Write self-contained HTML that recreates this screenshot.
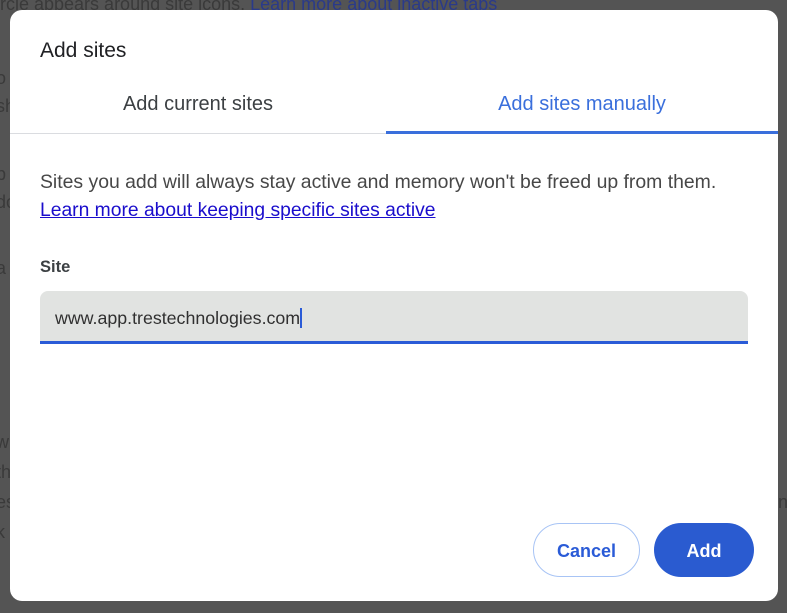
<!DOCTYPE html>
<html><head><style>
body{margin:0;width:787px;height:613px;background:#545454;position:relative;overflow:hidden;font-family:"Liberation Sans",sans-serif}
.bg{position:absolute;color:#3a3a3a;font-size:18px}
.dlg{position:absolute;left:10px;top:10px;width:768px;height:591px;background:#fff;border-radius:12px}
.t{position:absolute;white-space:nowrap}
</style></head><body>
<div class="bg" style="left:0;top:-6px">rcle appears around site icons. <span style="color:#2a3a8a;text-decoration:underline">Learn more about inactive tabs</span></div>
<div class="bg" style="left:-4px;top:68px">o</div><div class="bg" style="left:-4px;top:96px">sh</div>
<div class="bg" style="left:-4px;top:164px">p</div><div class="bg" style="left:-4px;top:192px">do</div>
<div class="bg" style="left:-4px;top:258px">a</div>
<div class="bg" style="left:-4px;top:432px">w</div><div class="bg" style="left:-4px;top:462px">th</div>
<div class="bg" style="left:-4px;top:492px">es</div><div class="bg" style="left:-4px;top:522px">k</div>
<div class="bg" style="left:778px;top:492px">n</div>
<div class="dlg">
<div class="t" style="left:30px;top:29px;font-size:21px;color:#202124">Add sites</div>
<div class="t" style="left:0;width:376px;top:83px;text-align:center;font-size:20px;color:#3c4043">Add current sites</div>
<div class="t" style="left:376px;width:392px;top:83px;text-align:center;font-size:20px;color:#3a6fdc">Add sites manually</div>
<div style="position:absolute;left:0;top:123px;width:768px;height:1px;background:#dadce0"></div>
<div style="position:absolute;left:376px;top:121px;width:392px;height:3px;background:#3a6fdc"></div>
<div class="t" style="left:30px;top:161px;font-size:19.4px;color:#474747">Sites you add will always stay active and memory won't be freed up from them.</div>
<div class="t" style="left:30px;top:190px;font-size:19.3px;color:#1a0dcc;text-decoration:underline">Learn more about keeping specific sites active</div>
<div class="t" style="left:30px;top:248px;font-size:16.5px;color:#3c4043;font-weight:bold">Site</div>
<div style="position:absolute;left:30px;top:281px;width:708px;height:50px;background:#e1e3e1;border-radius:8px 8px 0 0;border-bottom:3px solid #2a5bd7"></div>
<div class="t" style="left:45px;top:298px;font-size:17.8px;color:#303030">www.app.trestechnologies.com<span style="display:inline-block;width:1.5px;height:20px;background:#2a5bd7;vertical-align:-4px"></span></div>
<div style="position:absolute;left:523px;top:513px;width:107px;height:54px;border:1px solid #a8c4f5;border-radius:27px;box-sizing:border-box;color:#2a5bd7;font-size:18px;font-weight:bold;text-align:center;line-height:54px">Cancel</div>
<div style="position:absolute;left:644px;top:513px;width:100px;height:54px;background:#2a5bd0;border-radius:27px;color:#fff;font-size:18px;font-weight:bold;text-align:center;line-height:56px">Add</div>
</div>
</body></html>
